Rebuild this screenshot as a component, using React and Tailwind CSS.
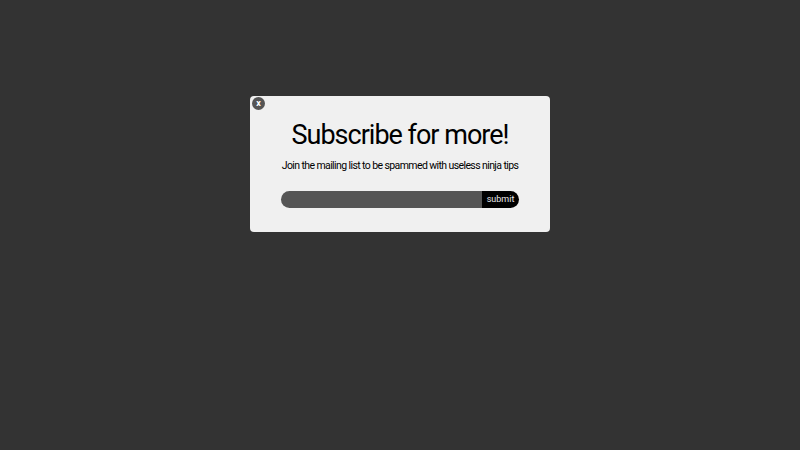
export default function App() {
  return (
    <div className="min-h-screen w-full bg-[#333333] pt-24" style={{ height: 450 }}>
      <div
        className="relative mx-auto w-[300px] h-[136px] rounded-sm bg-[#f0f0f0] flex flex-col items-center"
        style={{ fontFamily: 'Roboto, "Liberation Sans", sans-serif' }}
      >
        <button className="absolute left-[2px] top-[1px] w-[13px] h-[13px] rounded-full bg-[#555555] text-white text-[9px] font-bold leading-none flex items-center justify-center">
          x
        </button>
        <h1 className="mt-[23px] text-[27px] leading-[32px] tracking-[-1px] text-black whitespace-nowrap">
          Subscribe for more!
        </h1>
        <p className="mt-[8px] text-[10.5px] leading-[14px] tracking-[-0.6px] text-black whitespace-nowrap">
          Join the mailing list to be spammed with useless ninja tips
        </p>
        <div className="mt-[18px] flex w-[238px] h-[17px]">
          <input
            type="text"
            className="flex-1 min-w-0 h-full rounded-l-full bg-[#555555] outline-none px-2 text-white text-[9px]"
          />
          <button className="w-[37px] h-full rounded-r-full bg-black text-[#e8e8e8] text-[9px] leading-none">
            submit
          </button>
        </div>
      </div>
    </div>
  );
}
